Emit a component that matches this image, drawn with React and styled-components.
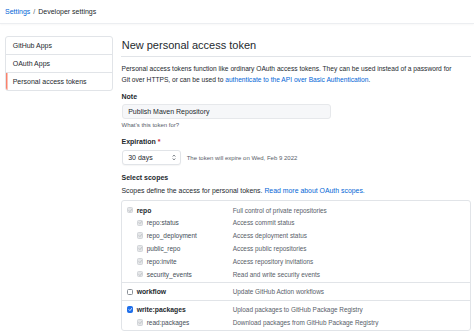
import React from "react";
import styled, { createGlobalStyle } from "styled-components";

const Global = createGlobalStyle`
  html, body { margin: 0; padding: 0; background: #ffffff; }
  body {
    font-family: "Liberation Sans", Arial, sans-serif;
    color: #24292e;
    -webkit-font-smoothing: antialiased;
  }
  * { box-sizing: border-box; }
`;

const Header = styled.header`
  height: 24px;
  padding-left: 5px;
  display: flex;
  align-items: center;
  font-size: 7px;
  border-bottom: 1px solid #eceef1;
  box-shadow: 0 1px 2px rgba(0, 0, 0, 0.03);
`;

const Crumb = styled.span`
  color: ${(p) => (p.$link ? "#0366d6" : "#24292e")};
`;

const Sep = styled.span`
  color: #586069;
  margin: 0 3px;
`;

const Layout = styled.div`
  display: flex;
  align-items: flex-start;
  gap: 8px;
  padding: 12px 3px 0 5px;
`;

const Sidebar = styled.nav`
  flex: 0 0 108px;
  border: 1px solid #e1e4e8;
  border-radius: 3px;
  overflow: hidden;
`;

const SideItem = styled.div`
  height: ${(p) => (p.$first ? "17px" : "18px")};
  display: flex;
  align-items: center;
  padding-left: 6.7px;
  font-size: 7px;
  color: #24292e;
  border-top: ${(p) => (p.$first ? "none" : "1px solid #e1e4e8")};
  box-shadow: ${(p) => (p.$selected ? "inset 1.5px 0 0 #f9826c" : "none")};
`;

const Content = styled.main`
  flex: 1;
  min-width: 0;
  display: flex;
  flex-direction: column;
`;

const TitleBar = styled.div`
  height: 21px;
  border-bottom: 1px solid #e1e4e8;
`;

const Title = styled.h1`
  margin: 0;
  font-size: 11px;
  font-weight: 400;
  line-height: 18px;
  padding-left: 0.7px;
`;

const Para = styled.p`
  margin: ${(p) => p.$mt || 0}px 0 0;
  font-size: ${(p) => p.$size || 7}px;
  line-height: ${(p) => p.$lh || 11}px;
  color: ${(p) => p.$color || "#24292e"};
  padding-left: 0.5px;
`;

const Link = styled.a`
  color: #0366d6;
  text-decoration: none;
`;

const Label = styled.div`
  margin-top: ${(p) => p.$mt}px;
  font-size: 7px;
  font-weight: 700;
  line-height: 10px;
  padding-left: 0.5px;
`;

const Required = styled.span`
  color: #cb2431;
  margin-left: 2px;
`;

const TextInput = styled.div`
  margin-top: 2px;
  width: 209px;
  height: 15px;
  margin-left: 0.7px;
  padding-left: 5.5px;
  display: flex;
  align-items: center;
  font-size: 7px;
  color: #24292e;
  background: #f6f7f9;
  border: 1px solid #e6e8eb;
  border-radius: 3px;
`;

const ExpiryRow = styled.div`
  margin-top: 3px;
  display: flex;
  align-items: center;
  gap: 6px;
  height: 15px;
`;

const Select = styled.div`
  width: 59px;
  height: 15px;
  margin-left: 0.7px;
  padding: 0 4px 0 5.5px;
  display: flex;
  align-items: center;
  justify-content: space-between;
  font-size: 7px;
  background: #ffffff;
  border: 1px solid #e1e4e8;
  border-radius: 3px;
  box-shadow: 0 1px 1px rgba(0, 0, 0, 0.04);
`;

const Hint = styled.span`
  font-size: 6px;
  color: #586069;
`;

const Table = styled.div`
  margin-top: 4.5px;
  border: 1px solid #e1e4e8;
  border-radius: 3px;
`;

const Group = styled.div`
  padding: 2.5px 0 1.5px;
  border-top: ${(p) => (p.$first ? "none" : "1px solid #e1e4e8")};
`;

const Row = styled.div`
  display: flex;
  align-items: center;
  height: 12.8px;
  padding-left: 4.7px;
`;

const NameCell = styled.div`
  flex: 0 0 106px;
  display: flex;
  align-items: center;
  gap: 3.4px;
  padding-left: ${(p) => (p.$sub ? 10 : 0)}px;
  font-size: ${(p) => (p.$sub ? 6.5 : 6.8)}px;
  font-weight: ${(p) => (p.$sub ? 400 : 700)};
  color: ${(p) => (p.$sub ? "#444d56" : "#24292e")};
`;

const Desc = styled.div`
  font-size: 6.4px;
  color: #586069;
  white-space: nowrap;
`;

const Box = styled.span`
  flex: 0 0 auto;
  width: 6.6px;
  height: 6.6px;
  border-radius: 1.5px;
  display: inline-flex;
  align-items: center;
  justify-content: center;
  background: ${(p) =>
    p.$state === "on" ? "#1f6feb" : p.$state === "off" ? "#ffffff" : "#e4e6e8"};
  border: 0.8px solid
    ${(p) =>
      p.$state === "on" ? "#1f6feb" : p.$state === "off" ? "#8a9097" : "#d2d5d9"};
  svg {
    display: block;
  }
`;

function Check({ state }) {
  return (
    <Box $state={state}>
      {state !== "off" && (
        <svg width="5" height="5" viewBox="0 0 10 10">
          <path
            d="M2 5.2 L4.2 7.4 L8.2 2.6"
            fill="none"
            stroke={state === "on" ? "#ffffff" : "#b7bbc0"}
            strokeWidth="1.8"
            strokeLinecap="round"
            strokeLinejoin="round"
          />
        </svg>
      )}
    </Box>
  );
}

function Arrows() {
  return (
    <svg width="4" height="7" viewBox="0 0 8 14">
      <path d="M1.5 5 L4 2.2 L6.5 5" fill="none" stroke="#444d56" strokeWidth="1.5" />
      <path d="M1.5 9 L4 11.8 L6.5 9" fill="none" stroke="#444d56" strokeWidth="1.5" />
    </svg>
  );
}

const groups = [
  {
    name: "repo",
    desc: "Full control of private repositories",
    state: "dis",
    subs: [
      ["repo:status", "Access commit status"],
      ["repo_deployment", "Access deployment status"],
      ["public_repo", "Access public repositories"],
      ["repo:invite", "Access repository invitations"],
      ["security_events", "Read and write security events"],
    ],
  },
  { name: "workflow", desc: "Update GitHub Action workflows", state: "off", subs: [] },
  {
    name: "write:packages",
    desc: "Upload packages to GitHub Package Registry",
    state: "on",
    subs: [["read:packages", "Download packages from GitHub Package Registry"]],
  },
];

export default function App() {
  return (
    <>
      <Global />
      <Header>
        <Crumb $link>Settings</Crumb>
        <Sep>/</Sep>
        <Crumb>Developer settings</Crumb>
      </Header>
      <Layout>
        <Sidebar>
          <SideItem $first>GitHub Apps</SideItem>
          <SideItem>OAuth Apps</SideItem>
          <SideItem $selected>Personal access tokens</SideItem>
        </Sidebar>
        <Content>
          <TitleBar>
            <Title>New personal access token</Title>
          </TitleBar>
          <Para $mt={5.5} $size={6.65}>
            Personal access tokens function like ordinary OAuth access tokens. They can be used instead of a password for
            <br />
            Git over HTTPS, or can be used to{" "}
            <Link>authenticate to the API over Basic Authentication</Link>.
          </Para>
          <Label $mt={7.5}>Note</Label>
          <TextInput>Publish Maven Repository</TextInput>
          <Para $mt={2} $size={6} $lh={9} $color="#586069">
            What’s this token for?
          </Para>
          <Label $mt={7}>
            Expiration<Required>*</Required>
          </Label>
          <ExpiryRow>
            <Select>
              <span>30 days</span>
              <Arrows />
            </Select>
            <Hint>The token will expire on Wed, Feb 9 2022</Hint>
          </ExpiryRow>
          <Label $mt={7.7}>Select scopes</Label>
          <Para $mt={3} $size={6.9} $lh={10}>
            Scopes define the access for personal tokens.{" "}
            <Link>Read more about OAuth scopes.</Link>
          </Para>
          <Table>
            {groups.map((g, i) => (
              <Group key={g.name} $first={i === 0}>
                <Row>
                  <NameCell>
                    <Check state={g.state} />
                    {g.name}
                  </NameCell>
                  <Desc>{g.desc}</Desc>
                </Row>
                {g.subs.map(([n, d]) => (
                  <Row key={n}>
                    <NameCell $sub>
                      <Check state="dis" />
                      {n}
                    </NameCell>
                    <Desc>{d}</Desc>
                  </Row>
                ))}
              </Group>
            ))}
          </Table>
        </Content>
      </Layout>
    </>
  );
}
